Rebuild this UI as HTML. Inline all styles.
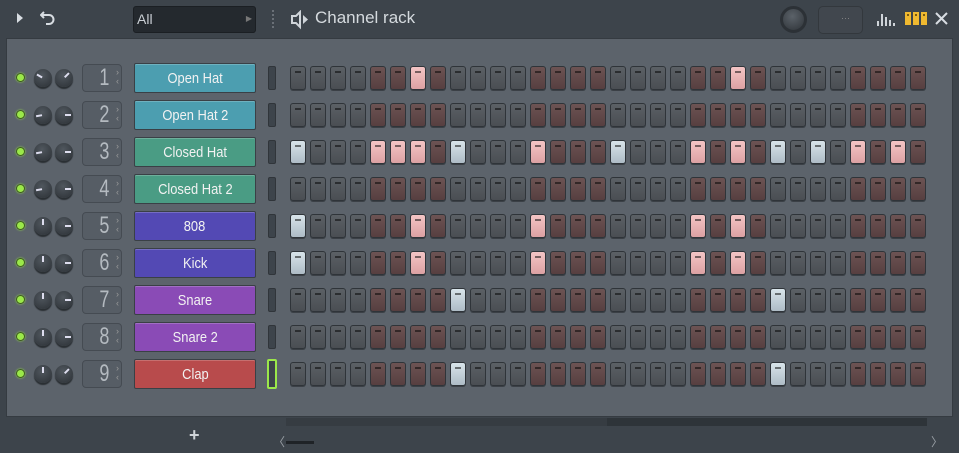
<!DOCTYPE html>
<html><head><meta charset="utf-8"><style>
*{margin:0;padding:0;box-sizing:border-box}
body{width:959px;height:453px;background:#3d444b;font-family:"Liberation Sans",sans-serif;position:relative;overflow:hidden}
.a{position:absolute}
#panel{left:6px;top:38px;width:947px;height:379px;background:#5c636b;border:1px solid #353b41}
.led{width:9px;height:9px;border-radius:50%;background:#9be84a;border:1px solid #3c5a1e;box-shadow:0 0 2px #9be84a}
.knob{width:18px;height:18px;border-radius:50%;background:radial-gradient(circle at 45% 35%,#50575e,#2b3035);box-shadow:0 2px 1px #2a2f33}
.knob i{position:absolute;left:8px;top:2px;width:2px;height:6px;background:#dde;transform-origin:1px 7px}
.num{width:40px;height:28px;border:1px solid #454b52;border-radius:4px;background:#565d65;color:#b4bac0;font-size:24px;text-align:right;padding-right:12px;line-height:26px}
.num span{display:inline-block;transform:scaleX(0.75);transform-origin:right}
.num:after{content:"›\A‹";white-space:pre;position:absolute;right:2px;top:3px;font-size:9px;line-height:9px;color:#999}
.btn{width:122px;height:30px;border-radius:2px;color:#f2f2f2;font-size:15px;text-align:center;line-height:29px;border:1px solid #3a4046;box-shadow:inset 0 1px 0 rgba(255,255,255,.2);white-space:nowrap}
.btn span{display:inline-block;transform:scaleX(0.86)}
.mute{width:8px;height:24px;background:#3d444b;border:1px solid #30353a;border-radius:2px}
.st{width:16px;height:24px;border-radius:3px;border:1px solid #2f3439;box-shadow:0 1px 0 #3b4046}
.st:before{content:"";position:absolute;left:4px;top:4px;width:6px;height:2px;background:rgba(0,0,0,.5)}
.g{background:linear-gradient(#5b6065,#4a4e53)}
.r{background:linear-gradient(#6d5353,#573f40)}
.gl{background:linear-gradient(#d8e4ea,#aebcc6)}
.rl{background:linear-gradient(#f4c5c5,#dca1a3)}
</style></head><body>
<div class="a" style="left:17px;top:13px;width:0;height:0;border-left:6px solid #d8dde2;border-top:5px solid transparent;border-bottom:5px solid transparent"></div>
<svg class="a" style="left:40px;top:9px" width="16" height="18"><path d="M4 3 L1 6 L4 9 M1 6 H9 A4.5 4.5 0 0 1 9 15 H6" fill="none" stroke="#d8dde2" stroke-width="2"/></svg>
<div class="a" style="left:133px;top:6px;width:123px;height:27px;background:#24292e;border:1px solid #1b1f23;border-radius:3px;color:#c9ced3;font-size:14px;line-height:24px;padding-left:3px">All<span style="position:absolute;right:3px;top:0;font-size:8px;color:#777">▶</span></div>
<div class="a" style="left:272px;top:10px;width:2px;height:18px;border-left:2px dotted #6a7077"></div>
<svg class="a" style="left:290px;top:10px" width="22" height="20"><path d="M2 6 H6 L10 2 V17 L6 13 H2 Z" fill="none" stroke="#cfd4d9" stroke-width="2"/><path d="M13 5 L18 9.5 L13 14Z" fill="#cfd4d9"/></svg>
<div class="a" style="left:315px;top:8px;color:#d5dade;font-size:17px">Channel rack</div>
<div class="a" style="left:780px;top:6px;width:27px;height:27px;border-radius:50%;border:3px solid #2c3136;background:radial-gradient(circle at 45% 35%,#5b6269,#2e3338)"></div>
<div class="a" style="left:818px;top:6px;width:45px;height:28px;border-radius:5px;background:#41474e;border:1px solid #33383d;color:#888;font-size:9px;text-align:right;padding:6px 12px 0 0">···</div>
<svg class="a" style="left:876px;top:11px" width="20" height="15"><g fill="#cfd4d9"><rect x="1" y="10" width="2" height="5"/><rect x="5" y="3" width="2" height="12"/><rect x="9" y="6" width="2" height="9"/><rect x="13" y="9" width="2" height="6"/><rect x="17" y="12" width="2" height="3"/></g></svg>
<svg class="a" style="left:905px;top:12px" width="22" height="13"><g fill="#f0b930"><rect x="0" y="0" width="6" height="13"/><rect x="8" y="0" width="6" height="13"/><rect x="16" y="0" width="6" height="13"/></g><g fill="#7a5a10"><rect x="2" y="2" width="2" height="2"/><rect x="10" y="2" width="2" height="2"/><rect x="18" y="2" width="2" height="2"/></g></svg>
<svg class="a" style="left:935px;top:12px" width="13" height="13"><path d="M1 1 L12 12 M12 1 L1 12" stroke="#d8dde2" stroke-width="2"/></svg>
<div id="panel" class="a"></div>
<div id="rows"></div>
<div class="a" style="left:286px;top:418px;width:640px;height:8px;background:#363c42"></div>
<div class="a" style="left:607px;top:418px;width:320px;height:8px;background:#2e3439"></div>
<div class="a" style="left:189px;top:425px;color:#d0d4d8;font-size:18px;font-weight:bold">+</div>
<div class="a" style="left:273px;top:433px;color:#9aa0a6;font-size:12px">〈</div>
<div class="a" style="left:286px;top:441px;width:28px;height:3px;background:#1f2327"></div>
<div class="a" style="left:931px;top:433px;color:#9aa0a6;font-size:12px">〉</div>
<script>
var names=["Open Hat","Open Hat 2","Closed Hat","Closed Hat 2","808","Kick","Snare","Snare 2","Clap"];
var cols=["#4c9eb0","#4c9eb0","#4a9c84","#4a9c84","#5349b4","#5349b4","#8a4bb6","#8a4bb6","#b84b4c"];
var k1=[-60,-100,-100,-100,0,0,0,0,0],k2=[45,90,90,90,90,90,90,90,45];
var act=[[6,22],[],[0,4,5,6,8,12,16,20,22,24,26,28,30],[],[0,6,12,20,22],[0,6,12,20,22],[8,24],[],[8,24]];
var h="";
for(var r=0;r<9;r++){var y=78+37*r;
h+='<div class="a led" style="left:16px;top:'+(y-5)+'px"></div>';
h+='<div class="a knob" style="left:34px;top:'+(y-9)+'px"><i style="transform:rotate('+k1[r]+'deg)"></i></div>';
h+='<div class="a knob" style="left:55px;top:'+(y-9)+'px"><i style="transform:rotate('+k2[r]+'deg)"></i></div>';
h+='<div class="a num" style="left:82px;top:'+(y-14)+'px"><span>'+(r+1)+'</span></div>';
h+='<div class="a btn" style="left:134px;top:'+(y-15)+'px;background:'+cols[r]+'"><span>'+names[r]+'</span></div>';
h+='<div class="a mute" style="left:268px;top:'+(y-12)+'px'+(r==8?';border:2px solid #9be84a;height:30px;top:'+(y-15)+'px;width:10px;left:267px':'')+'"></div>';
for(var s=0;s<32;s++){var red=Math.floor(s/4)%2==1,on=act[r].indexOf(s)>=0;
var c=on?(red?"rl":"gl"):(red?"r":"g");
h+='<div class="a st '+c+'" style="left:'+(290+20*s)+'px;top:'+(y-12)+'px"></div>';}}
document.getElementById("rows").innerHTML=h;
</script>
</body></html>
